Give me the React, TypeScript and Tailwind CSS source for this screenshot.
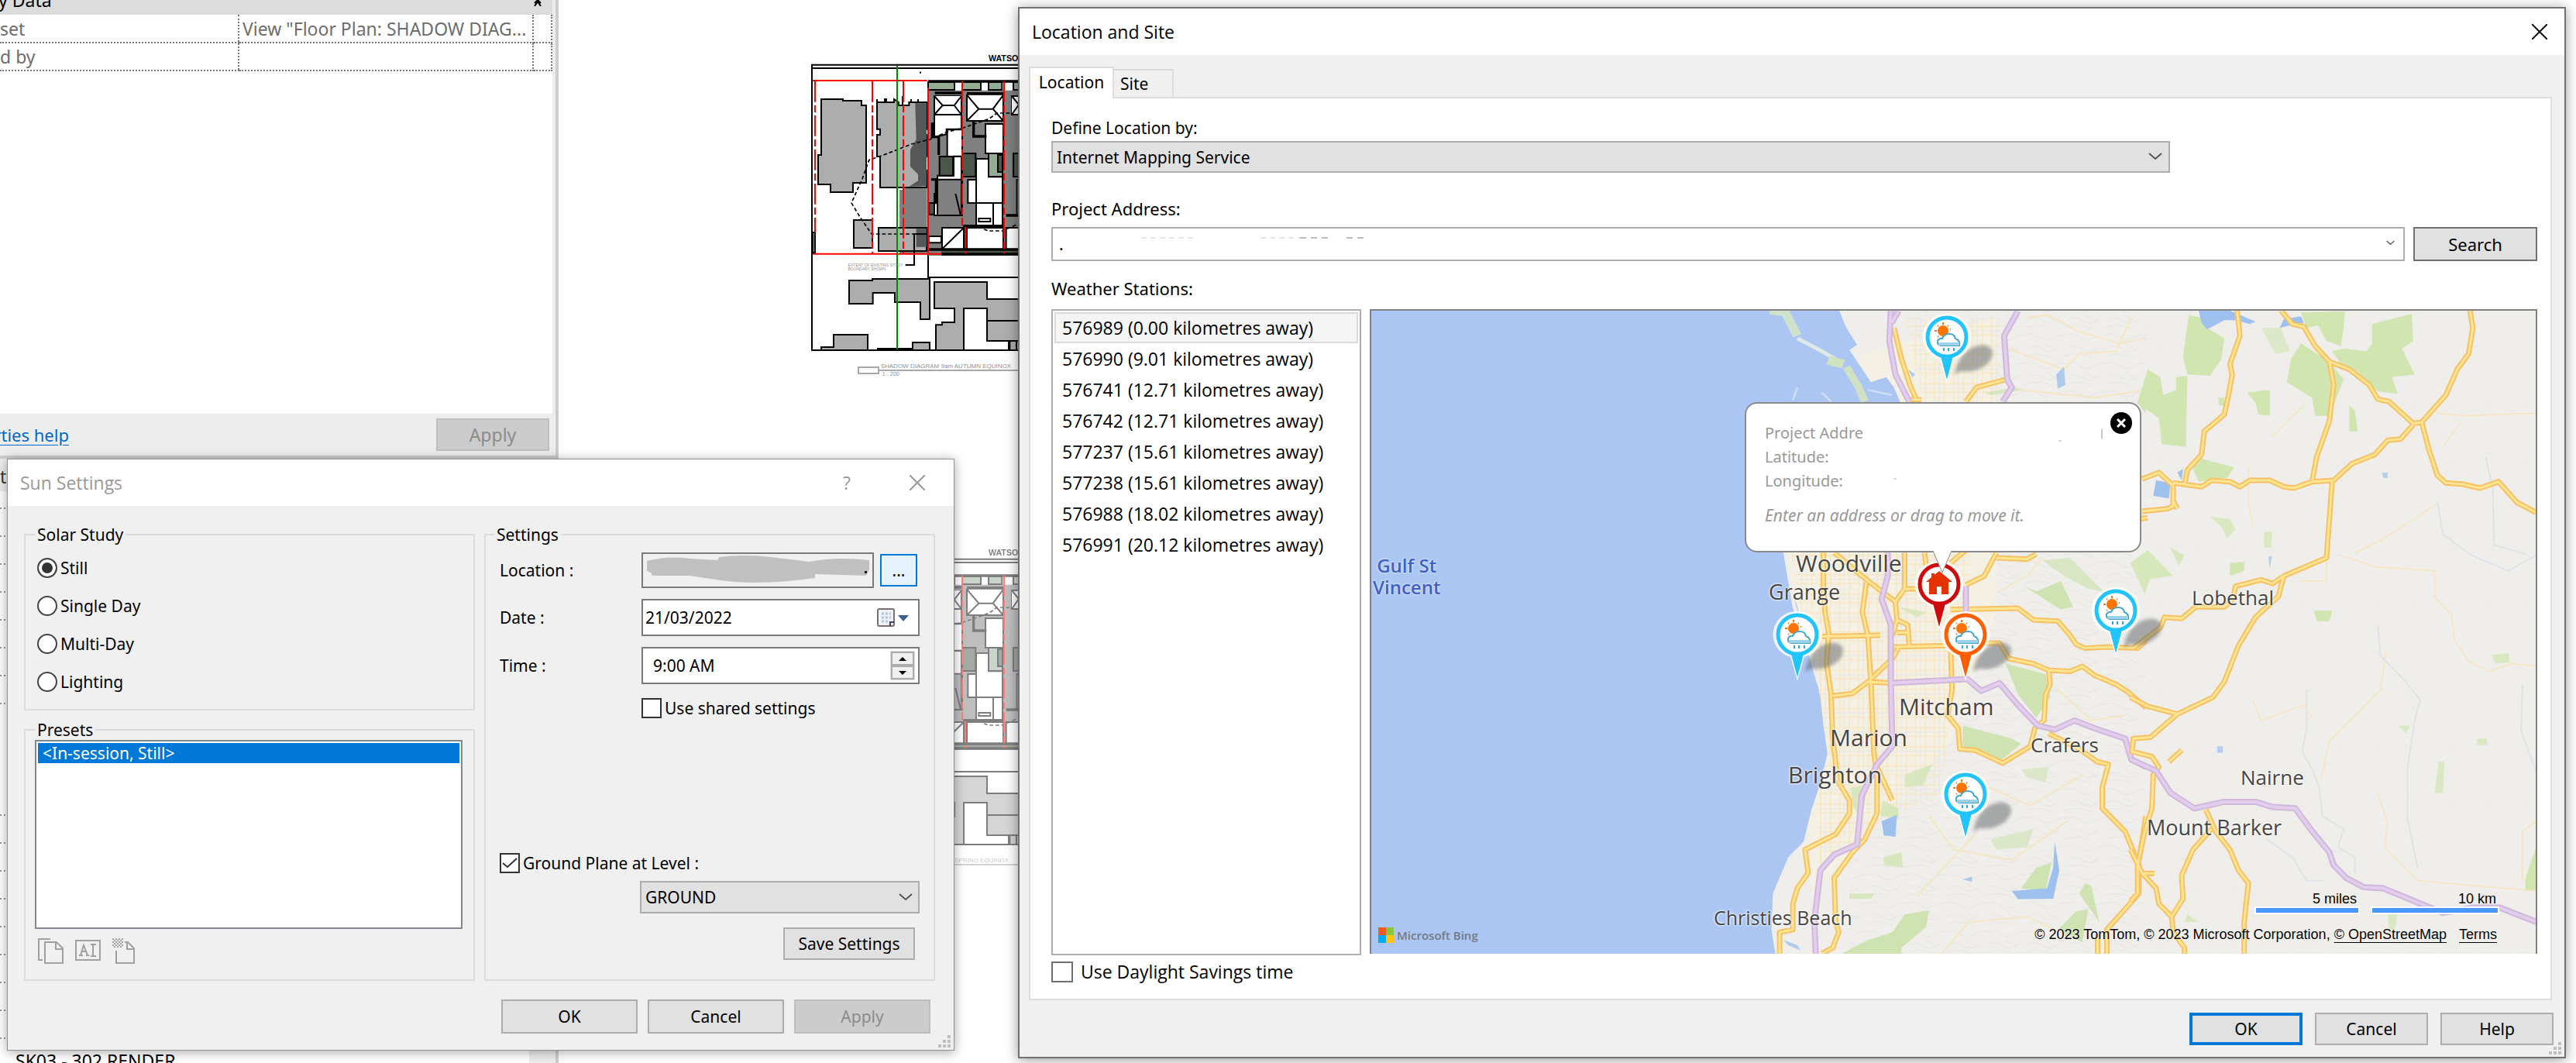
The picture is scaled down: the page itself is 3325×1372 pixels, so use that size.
import React from "react";

interface StationProps {
  id: string;
  distance: string;
}

const stations: StationProps[] = [
  { id: "576989", distance: "0.00" },
  { id: "576990", distance: "9.01" },
  { id: "576741", distance: "12.71" },
  { id: "576742", distance: "12.71" },
  { id: "577237", distance: "15.61" },
  { id: "577238", distance: "15.61" },
  { id: "576988", distance: "18.02" },
  { id: "576991", distance: "20.12" },
];

const studies = ["Still", "Single Day", "Multi-Day", "Lighting"];

const places = [
  { name: "Woodville", className: "left-[548px] top-[306px] text-[30px]" },
  { name: "Grange", className: "left-[513px] top-[343px] text-[27px]" },
  { name: "Mitcham", className: "left-[681px] top-[491px] text-[30px]" },
  { name: "Marion", className: "left-[592px] top-[531px] text-[30px]" },
  { name: "Brighton", className: "left-[538px] top-[579px] text-[30px]" },
  { name: "Crafers", className: "left-[851px] top-[540px] text-[26px]" },
  { name: "Lobethal", className: "left-[1059px] top-[350px] text-[26px]" },
  { name: "Nairne", className: "left-[1122px] top-[582px] text-[26px]" },
  { name: "Mount Barker", className: "left-[1001px] top-[647px] text-[27px]" },
  { name: "Christies Beach", className: "left-[442px] top-[763px] text-[25px]" },
];

// road centre lines, west half of the map
const westRoads = [
  "M515 970V1100L520 1200L532 1280L525 1400L540 1520L545 1690L552 1750L560 1850L600 1930V1980L555 2060L455 2120L465 2210L430 2270L415 2330V2430L372 2440V2523",
  "M655 1085L642 1200L660 1290L670 1470L680 1750L690 1830V1980L650 2080L610 2130L550 2230L555 2400L565 2440L545 2500L510 2523",
  "M550 970L640 1060L705 1120L750 1160L755 1230L790 1250L795 1330",
  "M780 970V1110L750 1160M780 1110H830M755 1230L740 1290M755 1280H790",
  "M510 1295L700 1290M740 1335L920 1330",
  "M545 1525L610 1515L660 1470L730 1475M665 1465L740 1380L760 1340",
  "M845 970L850 1020M980 960L930 1010",
  "M1080 970L1040 1060L980 1095M1080 990L1180 995L1210 975",
  "M930 1190L1150 1185L1200 1230L1280 1235L1320 1290L1340 1325L1370 1340L1440 1335L1540 1340L1568 1310",
  "M1040 1320H1090L1120 1380L1200 1400L1250 1425L1320 1430L1360 1410L1400 1445L1470 1480L1510 1510L1568 1570",
  "M1250 1425L1255 1480L1240 1520L1235 1620L1205 1650L1190 1720L1100 1785L1010 1735L960 1730L955 1650L920 1600L935 1500L930 1340",
  "M1250 1670L1350 1730L1410 1780L1445 1790L1425 1880V1960L1500 2050L1545 2180V2290L1440 2430V2523",
  "M1410 2450V2523M1568 1990L1545 2160",
  "M745 100L770 220L800 330L820 380M795 378H835",
  "M980 385L1015 330L1110 300",
  "M690 1800L740 1930",
];

const westMotorways = [
  "M735 33L730 150L750 280L795 385M760 33L738 80",
  "M725 970V1060L705 1150L735 1250V1470L740 1720L690 1790L640 1910L625 2100L550 2140L505 2200L485 2400L490 2523",
  "M740 1475L985 1460L1030 1505L1090 1475L1150 1560L1215 1640L1270 1655L1335 1620L1400 1650L1500 1690L1520 1770L1568 1800",
  "M1150 33L1105 130L1115 300L1130 330L1100 385",
  "M980 1100V1200",
];

const eastRoads = [
  "M375 33L385 130L350 240L358 280L345 360L330 435L260 500L250 590L200 650L190 710",
  "M530 33L570 85L610 95L650 170L700 230L770 260L840 320L870 375L910 385L995 470L1025 465L1110 360L1150 260L1190 200L1205 100L1195 33",
  "M700 230L715 320L700 460L655 600L640 690",
  "M995 475L950 530L905 535L860 590L780 625L715 690L640 695L575 720L540 715L490 690H420L385 715L350 695L285 690L250 715L150 700",
  "M40 685L100 660L150 710V790L130 800L40 810M150 770L165 800M30 840L60 835",
  "M1025 465L1050 570L1080 670L1110 700L1170 705L1230 720L1295 695L1360 775L1428 815",
  "M710 690L690 990L540 1060L520 1140L440 1220L380 1330L330 1470L290 1530L165 1595L60 1565L0 1530",
  "M540 1060L500 1090L460 1075L370 1100L360 1150L330 1180H230L180 1225L120 1220L105 1260L10 1340",
  "M165 1595L70 1685L10 1690L5 1740L75 1760L100 1800L80 1830L75 1960L50 2050L25 2180V2290L0 2320",
  "M265 1965L300 2050L350 2120L380 2200L415 2250L400 2400V2523",
  "M285 2040L220 2120L180 2220L185 2310L145 2380L100 2330L90 2270L40 2210L0 2120M40 2212H85",
  "M145 2380L150 2440L190 2500V2523M135 1780L180 1735",
];

const eastMotorways = [
  "M0 1770L90 1815L140 1900L225 1960L330 1935H440L500 1955L580 1960L640 2050L700 2130L715 2180L760 2230L820 2265L890 2270L1000 2320L1100 2365L1200 2345H1300L1428 2400",
];

const Roads = ({ lines, motorway }: { lines: string[]; motorway?: boolean }) => (
  <g fill="none" strokeLinejoin="round">
    <path
      d={lines.join("")}
      stroke={motorway ? "#cfb8dc" : "#f8c063"}
      strokeWidth={motorway ? 8 : 7}
      vectorEffect="non-scaling-stroke"
    />
    <path
      d={lines.join("")}
      stroke={motorway ? "#e2cdec" : "#fde592"}
      strokeWidth={motorway ? 4 : 3}
      vectorEffect="non-scaling-stroke"
    />
  </g>
);

const MapGround = () => (
  <svg
    viewBox="1770 401 1503 830"
    preserveAspectRatio="xMinYMin slice"
    className="block h-full w-full"
    aria-hidden="true"
  >
    <defs>
      <pattern id="streets" width="62" height="74" patternUnits="userSpaceOnUse">
        <path d="M10 0V74M40 0L44 74M0 20H62M0 55L62 52" fill="none" stroke="#f8e4b8" strokeWidth="3" />
        <path d="M25 0V74M0 38H62" fill="none" stroke="#e8e6e3" strokeWidth="3" />
      </pattern>
      <pattern id="relief" width="130" height="110" patternUnits="userSpaceOnUse">
        <path
          d="M0 20Q30 5 50 25T95 30T130 15M10 70Q35 50 60 72T115 62M0 100Q50 80 90 104M70 50L110 80"
          fill="none"
          stroke="#e6e5e3"
          strokeWidth="3"
        />
      </pattern>
    </defs>
    <rect x="1770" y="401" width="1503" height="830" fill="#efeeea" />
    <g transform="translate(2150 390) scale(.3954 .3333)">
      <path d="M750 33H1568V2523H600V1900L900 1500L1000 1200V500Z" fill="url(#relief)" />
      <path d="M640 200L1080 60V1200L930 1700L700 2000L480 2300L400 970Z" fill="#f4f0e3" />
      <path d="M410 970H1000L930 1560L900 1900L700 2010L500 2200L480 1500Z" fill="url(#streets)" />
      <path d="M780 60H1090V385H840Z" fill="url(#streets)" />
      <g fill="#cfe3b2">
        <path d="M1110 1400L1240 1440L1255 1530L1210 1610L1150 1520Z" />
        <path d="M970 1640L1130 1690L1160 1710L1090 1780L970 1720Z" />
        <path d="M1170 1100L1210 1120L1290 1080L1330 1180L1290 1190Z" />
        <path d="M780 2370L860 2355L850 2420L770 2500V2523H575L660 2470L740 2440Z" />
        <path d="M1370 2250L1390 2260L1415 2400L1350 2290Z" />
        <path d="M1210 2190L1260 2170L1240 2280L1160 2270Z" />
        <path d="M1340 2360L1380 2350L1360 2480L1280 2430Z" />
        <path d="M1230 1000L1320 990L1430 1120L1380 1110L1300 1060Z" opacity=".7" />
        <path d="M1568 290L1540 390L1568 430Z" />
        <path d="M780 1830L870 1790L840 1870L780 1880Z" opacity=".7" />
        <path d="M605 1880L660 1870L640 2000L610 1950ZM710 1930L760 1960V2000L700 1990Z" opacity=".8" />
        <path d="M1160 1810L1250 1800L1240 1860L1180 1840ZM1060 2080L1200 2040L1180 2110L1080 2120Z" opacity=".6" />
        <path d="M710 2150L770 2130L775 2190L715 2180ZM600 2290L680 2290L670 2310H600Z" opacity=".8" />
        <path d="M1040 350L1140 330L1170 340L1060 360ZM760 1180L850 1200L820 1220Z" opacity=".7" />
      </g>
      <path
        d="M1180 60L1250 50L1340 110L1480 160L1568 140M1120 180L1300 260L1350 200L1470 190L1520 60M1160 340L1400 370L1568 340M1000 1420L1020 1380M1280 1500L1390 1620L1500 1600M1000 1850L1190 1950L1360 1830M860 1990L940 2120L1130 2160L1310 2010M820 2300L900 2200L1010 2060M900 2523L990 2400L1180 2380L1320 2460M1090 1120L1180 1060L1230 990"
        fill="none"
        stroke="#f5e6c4"
        strokeWidth="6"
      />
      <path
        d="M-1000 0H555L590 100L625 165L600 185L625 230L670 310L720 290L745 330L765 385L700 600L385 970L400 1060L430 1180L460 1320L490 1450L505 1530L515 1640L528 1750L500 1880L475 1970L450 2090L400 2150L350 2290L345 2430L358 2523H-1000Z"
        fill="#abc6f2"
      />
      <g fill="none" strokeLinejoin="round">
        <path d="M340 33L390 40L430 130" stroke="#cfe3cc" strokeWidth="30" />
        <path d="M430 140L510 190L560 225" stroke="#dfeae6" strokeWidth="14" />
        <path d="M530 225L580 240" stroke="#cfe3c0" strokeWidth="34" />
        <path d="M590 250L630 330L650 385" stroke="#cfe0c4" strokeWidth="26" />
        <path d="M660 340L740 360M415 380L430 330M510 350L540 385" stroke="#cbdcf3" strokeWidth="8" />
        <path d="M390 970L420 1180L470 1350L500 1480" stroke="#efeeea" strokeWidth="12" />
      </g>
      <g fill="#9dc0ee">
        <path d="M1130 2280L1245 2270L1265 2190L1270 2090L1285 2200L1265 2310L1150 2312Z" />
        <path d="M705 2010L755 1985L750 2070L712 2065Z" />
        <path d="M1275 280L1300 250L1305 320L1280 335ZM790 260L815 280L805 290Z" opacity=".8" />
        <path d="M970 2235L1000 2225V2245ZM385 2470L430 2490L440 2510L400 2490Z" opacity=".8" />
      </g>
      <Roads lines={westRoads} />
      <Roads lines={westMotorways} motorway />
    </g>
    <g transform="translate(2750 390) scale(.3667 .3333)">
      <path d="M48 33H1428V2523H48Z" fill="url(#relief)" opacity=".4" />
      <g fill="#d1e5b0">
        <path d="M205 50L250 60L270 100L330 140L320 220L280 285L200 280L185 210Z" />
        <path d="M60 260L105 290L115 360L160 340L160 290L200 285L195 560L110 550L100 450L25 390Z" />
        <path d="M600 160L700 230L750 300L700 440L650 440L640 370L550 310L565 220Z" />
        <path d="M850 85L990 45L995 150L955 180L1000 280L920 290L940 355L870 345L800 270L740 240L710 190L750 180L830 190L850 160Z" />
        <path d="M600 40L755 35L750 100L740 170L690 150L660 90L620 100Z" />
        <path d="M410 350L490 340L490 440L450 435L440 390Z" />
        <path d="M210 620L250 605L365 640L340 680L240 695Z" />
        <path d="M770 400L790 420L800 500L770 500ZM310 370L330 370V400H310Z" />
        <path d="M280 830L350 840L370 880L340 915L320 870ZM470 890H500L495 950H470Z" opacity=".7" />
        <path d="M0 1010L60 960L150 1060L70 1070L50 1130ZM140 950L190 980L170 1020Z" opacity=".8" />
        <path d="M350 1010L400 1005L400 1040L350 1060ZM645 1195H710L700 1235H655Z" />
        <path d="M1270 1365L1330 1360L1335 1395L1285 1400ZM940 1640H985L970 1670ZM1220 1690H1255V1715H1220ZM1085 1780H1105L1100 1900H1070Z" opacity=".7" />
        <path d="M1428 2110L1390 2230V2280H1428Z" />
        <path d="M460 100H530L560 190L510 200Z" opacity=".6" />
        <path d="M200 2370L240 2400L190 2400ZM905 2370H940L930 2430H910Z" opacity=".7" />
      </g>
      <g fill="#9dc0ee">
        <path d="M240 33H350L440 75L420 85L370 70L330 70L270 105L250 80Z" />
        <path d="M525 100L540 65L600 55L610 80L560 90Z" />
        <path d="M90 690L140 700L135 760L80 750Z" />
        <path d="M165 660L185 645L180 690Z" />
        <path d="M885 660L905 660V680H890ZM305 1720H325V1745H305ZM485 985H498L490 1030Z" opacity=".7" />
      </g>
      <g fill="none" strokeWidth="5">
        <path
          d="M415 640V780L430 860M690 990V1080H590M740 980L860 1025L1070 1040V1140L1130 1210L1140 1310L1190 1390L1260 1430L1340 1400L1428 1410M790 970L900 910L1080 780M1080 430L1180 440L1428 430M1100 560L1160 470M900 1350L880 1500L700 1700L670 1850M430 1540L460 1620L610 1560L640 1610M870 1900L905 2020L895 2110L1010 2240L1428 2280M1380 2240V2050L1428 2010M500 520L610 400"
          stroke="#f6e5c2"
        />
        <path
          d="M1080 770L1100 900L1200 980L1330 1040L1428 980M1250 600L1275 720L1280 940L1390 975M870 1250L880 1370L960 1460L1020 1540L1000 1620L975 1800V2000L1010 2190M620 1500V1650L605 1740L640 1810L665 1880L675 1990L750 2040L730 2110L790 2150V2210M480 2080L570 2150L620 2240L680 2240M1380 1480L1375 1660L1428 1820"
          stroke="#dde1e8"
        />
      </g>
      <Roads lines={eastRoads} />
      <Roads lines={eastMotorways} motorway />
    </g>
  </svg>
);

interface PinProps {
  color: string;
  className: string;
  home?: boolean;
}

const Pin = ({ color, className, home }: PinProps) => (
  <svg viewBox="0 0 100 92" className={`absolute h-[92px] w-[100px] ${className}`} aria-hidden="true">
    {!home && (
      <path
        d="M42 80Q46 56 64 46Q82 38 90 48Q94 62 76 72Q64 78 50 76Z"
        fill="#5f6368"
        className="opacity-50 blur-[2px]"
      />
    )}
    <path
      d="M32 2A30 30 0 0 1 41 61L32 92L23 61A30 30 0 0 1 32 2Z"
      fill="#fff"
      opacity=".8"
    />
    <path d="M24 57H40L32 87Z" fill={color} />
    <circle cx="32" cy="32" r="25" fill="#fff" stroke={color} strokeWidth="5" />
    {home ? (
      <path d="M32 15L49 29H44V45H35V35H29V45H19V29H15L22 23V18H26V20Z" fill="#e63200" />
    ) : (
      <g>
        <circle cx="27" cy="24" r="7" fill="#ff7300" />
        <path
          d="M27 13V16M16 24H19M20 17L21 18M34 17L33 18M36 22H37M20 32L21 31"
          stroke="#ff7300"
          strokeWidth="2"
        />
        <path
          d="M24 43Q19 42 20 37Q22 33 26 34Q28 28 35 28Q42 28 43 34Q49 36 48 43Z"
          fill="#fff"
          stroke="#47a5c9"
          strokeWidth="2"
        />
        <path d="M21 41H48" stroke="#9bd2ea" strokeWidth="4" />
        <path d="M28 46V50M34 46V50M41 46V50" stroke="#2aa5dc" strokeWidth="2" />
      </g>
    )}
  </svg>
);

const StationMap = () => (
  <div className="relative h-[832px] min-w-0 flex-1 border-2 border-b-0 border-[#808080]">
    <div className="h-[830px] overflow-hidden">
      <MapGround />
    </div>
    {places.map((place) => (
      <span
        key={place.name}
        className={`absolute whitespace-nowrap font-['Open_Sans',sans-serif] leading-[40px] text-[#454545] [text-shadow:0_0_3px_#fff,0_0_3px_#fff] ${place.className}`}
      >
        {place.name}
      </span>
    ))}
    <p className="absolute left-[2px] top-[315px] text-center font-['Open_Sans',sans-serif] text-[24px] font-semibold leading-[28px] text-[#3d61c4] [text-shadow:0_0_3px_#dce8fb,0_0_3px_#dce8fb]">
      Gulf St
      <br />
      Vincent
    </p>
    <Pin color="#21c4fd" className="left-[711px] top-[2px]" />
    <Pin color="#cf0a0a" className="left-[701px] top-[321px]" home />
    <Pin color="#21c4fd" className="left-[518px] top-[386px]" />
    <Pin color="#ff5f00" className="left-[735px] top-[386px]" />
    <Pin color="#21c4fd" className="left-[929px] top-[355px]" />
    <Pin color="#21c4fd" className="left-[735px] top-[592px]" />

    <div className="absolute left-[482px] top-[118px] w-[512px] rounded-2xl border-2 border-[#8a8a8a] bg-white px-6 pb-[30px] pt-[22px] text-[20px] leading-[31px] text-[#999]">
      <p>Project Addre</p>
      <p>Latitude:</p>
      <p>Longitude:</p>
      <p className="mt-[14px] text-[21px] italic">Enter an address or drag to move it.</p>
      <button
        type="button"
        aria-label="Close"
        className="absolute right-[10px] top-[11px] flex h-[28px] w-[28px] items-center justify-center rounded-full bg-black"
      >
        <svg viewBox="0 0 12 12" className="h-3 w-3">
          <path d="M1 1L11 11M11 1L1 11" stroke="#fff" strokeWidth="3" />
        </svg>
      </button>
      <svg viewBox="0 0 26 32" className="absolute left-[240px] top-full h-8 w-[26px]" aria-hidden="true">
        <path d="M1 0L13 28L25 0" fill="#fff" stroke="#8a8a8a" strokeWidth="1" />
      </svg>
      <svg viewBox="0 0 300 90" className="absolute left-[170px] top-[30px] h-[90px] w-[300px]" aria-hidden="true">
        <path d="M289 3V15" stroke="#8a8aa0" />
        <path d="M233 18H237M20 67H24" stroke="#b5b5b5" />
      </svg>
    </div>

    <div className="absolute bottom-[14px] left-[9px] flex items-center gap-1 font-['Open_Sans',sans-serif] text-[15px] font-semibold leading-[20px] text-[#737a86]">
      <span className="grid h-5 w-5 grid-cols-2" aria-hidden="true">
        <span className="bg-[#f65a22]" />
        <span className="bg-[#8bc53f]" />
        <span className="bg-[#00aeef]" />
        <span className="bg-[#ffc20e]" />
      </span>
      Microsoft Bing
    </div>

    <div className="absolute bottom-[15px] right-[47px] flex flex-col items-end font-['Liberation_Sans',Arial,sans-serif] text-[18px] leading-[20px] text-black">
      <div className="mb-[16px] flex gap-[14px] text-right">
        <div className="w-[136px]">
          <p className="pr-1">5 miles</p>
          <div className="h-[10px] border-2 border-white bg-[#4797ff]" />
        </div>
        <div className="w-[166px]">
          <p className="pr-1">10 km</p>
          <div className="h-[10px] border-2 border-white bg-[#4797ff]" />
        </div>
      </div>
      <p className="pr-[3px] [text-shadow:0_0_2px_#fff]">
        © 2023 TomTom, © 2023 Microsoft Corporation,{" "}
        <a href="#osm" className="underline underline-offset-4">
          © OpenStreetMap
        </a>
        <a href="#terms" className="ml-4 underline underline-offset-4">
          Terms
        </a>
      </p>
    </div>
  </div>
);

interface PushButtonProps {
  children: React.ReactNode;
  className: string;
  disabled?: boolean;
}

const PushButton = ({ children, className, disabled }: PushButtonProps) => (
  <button
    type="button"
    disabled={disabled}
    className={`flex items-center justify-center border-2 ${
      disabled ? "border-[#bfbfbf] bg-[#ccc] text-[#8b8b8b]" : "bg-[#e1e1e1] text-black"
    } ${className}`}
  >
    {children}
  </button>
);

const Chevron = ({ className }: { className: string }) => (
  <svg viewBox="0 0 18 10" className={`pointer-events-none absolute ${className}`} aria-hidden="true">
    <path d="M1 1L9 8L17 1" fill="none" stroke="#555" strokeWidth="2" />
  </svg>
);

const Cross = ({ color }: { color: string }) => (
  <svg viewBox="0 0 20 20" className="h-5 w-5" aria-hidden="true">
    <path d="M0 0L20 20M20 0L0 20" stroke={color} strokeWidth="2" />
  </svg>
);

const Grip = () => (
  <svg viewBox="0 0 17 17" className="absolute bottom-[2px] right-[3px] h-[17px] w-[17px]" aria-hidden="true">
    <path
      d="M12 0H16V4H12ZM6 6H10V10H6ZM12 6H16V10H12ZM0 12H4V16H0ZM6 12H10V16H6ZM12 12H16V16H12Z"
      fill="#bfbfbf"
    />
  </svg>
);

const LocationDialog = () => (
  <section
    aria-labelledby="location-title"
    className="absolute left-[1314px] right-[13px] top-[9px] border-2 border-[#6f7370] bg-[#f0f0f0] shadow-[0_2px_16px_rgba(0,0,0,0.4)]"
  >
    <header className="flex h-[60px] items-center justify-between bg-white pl-4 pr-[22px]">
      <h1 id="location-title" className="font-['Open_Sans',sans-serif] text-[23px]">
        Location and Site
      </h1>
      <button type="button" aria-label="Close">
        <Cross color="#111" />
      </button>
    </header>

    <div role="tablist" className="flex items-end pl-3 pt-[15px]">
      <button
        type="button"
        role="tab"
        aria-selected="true"
        className="z-10 -mb-[2px] h-[41px] w-[110px] border-2 border-b-0 border-[#dcdcdc] bg-white pb-1"
      >
        Location
      </button>
      <button
        type="button"
        role="tab"
        aria-selected="false"
        className="h-[36px] w-[77px] border-2 border-b-0 border-l-0 border-[#dcdcdc] pl-2 text-left"
      >
        Site
      </button>
    </div>

    <div className="ml-3 mr-4 border-2 border-[#dcdcdc] bg-white pb-[21px] pl-[27px] pr-[17px] pt-[23px]">
      <label htmlFor="define" className="mb-[2px] block leading-[30px]">
        Define Location by:
      </label>
      <div className="relative w-[1444px]">
        <select
          id="define"
          className="h-[41px] w-full appearance-none border-2 border-[#adadad] bg-[#e1e1e1] pl-[5px]"
        >
          <option>Internet Mapping Service</option>
        </select>
        <Chevron className="right-[10px] top-[15px] h-[10px] w-[18px]" />
      </div>

      <label htmlFor="address" className="mb-[9px] mt-[31px] block text-[22px] leading-[30px]">
        Project Address:
      </label>
      <div className="flex gap-[11px]">
        <div className="relative flex-1">
          <input
            id="address"
            defaultValue="."
            className="h-[44px] w-full border-2 border-[#abadb3] bg-white pl-[8px]"
          />
          <svg
            viewBox="0 0 300 4"
            className="pointer-events-none absolute left-[116px] top-[12px] h-1 w-[300px]"
            aria-hidden="true"
          >
            <path
              d="M0 2H68M154 2H205"
              stroke="#ccc"
              strokeWidth="1"
              strokeDasharray="7 5"
            />
            <path d="M205 2H245M265 2H292" stroke="#777" strokeWidth="1" strokeDasharray="8 6" />
          </svg>
          <Chevron className="right-[13px] top-[17px] h-[7px] w-[11px]" />
        </div>
        <PushButton className="h-[44px] w-[160px] border-[#707070] bg-[#ddd]">
          <span className="text-[22px]">Search</span>
        </PushButton>
      </div>

      <h2 id="stations" className="mb-3 mt-5 text-[22px] leading-[30px]">
        Weather Stations:
      </h2>
      <div className="flex gap-[11px]">
        <ul
          role="listbox"
          aria-labelledby="stations"
          className="h-[834px] w-[400px] border-2 border-[#abadb3] p-[2px] font-['Open_Sans',sans-serif] text-[23px]"
        >
          {stations.map((station, index) => (
            <li
              key={station.id}
              role="option"
              aria-selected={index === 0}
              className={`flex h-10 items-center border-2 pl-[8px] ${
                index === 0 ? "border-[#dadada] bg-[#f5f5f5]" : "border-transparent"
              }`}
            >
              {station.id} ({station.distance} kilometres away)
            </li>
          ))}
        </ul>
        <StationMap />
      </div>

      <label className="mt-[7px] flex h-7 items-center gap-[10px] font-['Open_Sans',sans-serif] text-[23px]">
        <input type="checkbox" className="h-[27px] w-[28px] appearance-none border-2 border-[#707070] bg-white" />
        Use Daylight Savings time
      </label>
    </div>

    <footer className="flex justify-end gap-4 pb-[15px] pr-[14px] pt-4">
      <PushButton className="h-[42px] w-[146px] border-4 border-[#0078d7]">OK</PushButton>
      <PushButton className="h-[42px] w-[146px] border-[#adadad]">Cancel</PushButton>
      <PushButton className="h-[42px] w-[146px] border-[#adadad]">Help</PushButton>
    </footer>
    <Grip />
  </section>
);

const CopyIcon = () => (
  <svg viewBox="0 0 34 34" className="h-[34px] w-[34px]" fill="none" stroke="#a0a0a0" strokeWidth="2">
    <path d="M16 1H1V28H6" />
    <path d="M9 5H24L32 13V32H9ZM23 5V14H32" fill="#f0f0f0" />
  </svg>
);

const RenameIcon = () => (
  <svg viewBox="0 0 34 34" className="h-[34px] w-[34px]" fill="none" stroke="#a0a0a0" strokeWidth="2">
    <rect x="1" y="3" width="31" height="25" />
    <path d="M5 22H10M7 22L11 9L16 22M14 22H18M9 17H14" />
    <path d="M20 8H22L23 9L24 8H27M23 9V22M20 23H22L23 22L24 23H27" />
  </svg>
);

const DeleteIcon = () => (
  <svg viewBox="0 0 34 34" className="h-[34px] w-[34px]" fill="none" stroke="#a0a0a0" strokeWidth="2">
    <path d="M0 1H14M0 5H14M0 9H14" strokeDasharray="2 2" />
    <path d="M2 3H14M2 7H14M2 11H14" strokeDasharray="2 2" />
    <path d="M5 16V32H28V13L20 5H16M19 5V14H28" />
  </svg>
);

const SunDialog = () => (
  <section
    aria-labelledby="sun-title"
    className="absolute left-[9px] top-[592px] w-[1223px] border border-[#8f8f8f] bg-[#f0f0f0] shadow-[0_2px_14px_rgba(0,0,0,0.35)]"
  >
    <header className="flex h-[60px] items-center bg-white pl-4 pr-[37px] font-['Open_Sans',sans-serif] text-[23px] text-[#999]">
      <h1 id="sun-title" className="flex-1">
        Sun Settings
      </h1>
      <button type="button" aria-label="Context help" className="mr-[75px] w-3">
        ?
      </button>
      <button type="button" aria-label="Close">
        <Cross color="#999" />
      </button>
    </header>

    <div className="flex gap-3 pl-[21px] pr-6 pt-[20px]">
      <div className="flex w-[582px] flex-col gap-[10px]">
        <fieldset className="h-[244px] border-2 border-[#dcdcdc] px-[15px]">
          <legend className="-ml-[3px] px-[3px] leading-[34px]">Solar Study</legend>
          <div className="mt-[12px] flex flex-col gap-[22px]">
            {studies.map((study) => (
              <label key={study} className="flex h-[27px] items-center gap-[4px]">
                <input
                  type="radio"
                  name="study"
                  defaultChecked={study === "Still"}
                  className="h-[26px] w-[26px] appearance-none rounded-full border-2 border-[#444] bg-white checked:bg-[#333] checked:shadow-[inset_0_0_0_4px_#fff]"
                />
                {study}
              </label>
            ))}
          </div>
        </fieldset>
        <fieldset className="h-[339px] border-2 border-[#dcdcdc] px-3">
          <legend className="px-[3px] leading-[30px]">Presets</legend>
          <ul
            role="listbox"
            aria-label="Presets"
            className="-mt-[2px] h-[244px] w-[552px] border-2 border-[#828790] bg-white p-[2px]"
          >
            <li role="option" aria-selected="true" className="bg-[#0078d7] pl-[6px] leading-[26px] text-white">
              &lt;In-session, Still&gt;
            </li>
          </ul>
          <div className="mt-[12px] flex gap-[14px] pl-1">
            <button type="button" aria-label="Duplicate" disabled>
              <CopyIcon />
            </button>
            <button type="button" aria-label="Rename" disabled>
              <RenameIcon />
            </button>
            <button type="button" aria-label="Delete" disabled>
              <DeleteIcon />
            </button>
          </div>
        </fieldset>
      </div>

      <fieldset className="flex-1 border-2 border-[#dcdcdc] pl-[18px] pr-[18px]">
        <legend className="-ml-[7px] px-[3px] leading-[34px]">Settings</legend>
        <div className="grid grid-cols-[183px_1fr] items-center gap-y-[14px] pt-[6px]">
          <label htmlFor="location">Location :</label>
          <div className="flex items-center gap-2">
            <div className="relative w-[300px]">
              <input id="location" readOnly className="block h-[46px] w-full border-2 border-[#7a7a7a]" />
              <svg
                viewBox="0 0 296 42"
                className="pointer-events-none absolute left-[2px] top-[2px] h-[42px] w-[296px]"
                aria-hidden="true"
              >
                <path
                  d="M5 9Q35 2 60 6L96 8L98 4Q130 0 165 4L215 10Q250 3 292 8V20L288 28L222 26V31Q150 41 100 34L60 28H12L10 24L5 22Z"
                  fill="#c0c0c0"
                />
                <path d="M286 22H289V25H286Z" fill="#112" />
              </svg>
            </div>
            <button
              type="button"
              aria-label="Browse location"
              className="h-[42px] w-[48px] border-2 border-[#0078d7] bg-[#e5f1fb]"
            >
              ...
            </button>
          </div>

          <label htmlFor="date">Date :</label>
          <div className="relative">
            <input
              id="date"
              defaultValue="21/03/2022"
              className="block h-[48px] w-full border-2 border-[#7a7a7a] bg-white pl-[3px]"
            />
            <svg viewBox="0 0 42 28" className="absolute right-[13px] top-[12px] h-7 w-[42px]" aria-hidden="true">
              <rect x="1" y="1" width="21" height="22" rx="2" fill="#eef2f8" stroke="#7d6f6f" strokeWidth="2" />
              <path d="M6 7H18M6 12H18M6 17H15" stroke="#b9c5d6" strokeWidth="3" strokeDasharray="3 2" />
              <path d="M17 23V18H22" fill="#fff" stroke="#3c4460" strokeWidth="2" />
              <path d="M27 9H41L34 17Z" fill="#3f5f92" />
            </svg>
          </div>

          <label htmlFor="time">Time :</label>
          <div className="flex h-[48px] items-center border-2 border-[#7a7a7a] bg-white pr-1">
            <input id="time" defaultValue="9:00 AM" className="min-w-0 flex-1 pl-[13px]" />
            <div className="flex flex-col border border-[#ddd]">
              <button
                type="button"
                aria-label="Later"
                className="flex h-[18px] w-[30px] items-center justify-center border-2 border-[#acacac] bg-[#f0f0f0]"
              >
                <svg viewBox="0 0 10 5" className="h-[5px] w-[10px]">
                  <path d="M5 0L10 5H0Z" />
                </svg>
              </button>
              <button
                type="button"
                aria-label="Earlier"
                className="flex h-[18px] w-[30px] items-center justify-center border-2 border-[#acacac] bg-[#f0f0f0]"
              >
                <svg viewBox="0 0 10 5" className="h-[5px] w-[10px]">
                  <path d="M5 5L10 0H0Z" />
                </svg>
              </button>
            </div>
          </div>
        </div>

        <label className="ml-[183px] mt-[18px] flex h-[26px] items-center gap-[4px]">
          <input type="checkbox" className="h-[26px] w-[26px] appearance-none border-2 border-[#333] bg-white" />
          Use shared settings
        </label>

        <label className="relative mt-[174px] flex h-[26px] items-center gap-[4px]">
          <input
            type="checkbox"
            defaultChecked
            className="h-[26px] w-[26px] appearance-none border-2 border-[#333] bg-white"
          />
          <svg
            viewBox="0 0 20 14"
            className="pointer-events-none absolute left-[3px] top-[6px] h-[14px] w-5"
            aria-hidden="true"
          >
            <path d="M1 7L7 12L19 1" fill="none" stroke="#333" strokeWidth="2" />
          </svg>
          Ground Plane at Level :
        </label>

        <div className="relative ml-[181px] mt-[10px]">
          <select
            aria-label="Ground plane level"
            className="h-[42px] w-full appearance-none border-2 border-[#adadad] bg-[#e1e1e1] pl-[5px]"
          >
            <option>GROUND</option>
          </select>
          <Chevron className="right-[9px] top-[16px] h-[10px] w-[18px]" />
        </div>
        <div className="mr-[6px] mt-[18px] flex justify-end">
          <PushButton className="h-[42px] w-[170px] border-[#adadad]">Save Settings</PushButton>
        </div>
      </fieldset>
    </div>

    <footer className="flex justify-end gap-[13px] pb-[21px] pr-[30px] pt-6">
      <PushButton className="h-[44px] w-[176px] border-[#adadad]">OK</PushButton>
      <PushButton className="h-[44px] w-[176px] border-[#adadad]">Cancel</PushButton>
      <PushButton className="h-[44px] w-[176px]" disabled>
        Apply
      </PushButton>
    </footer>
    <Grip />
  </section>
);

interface FloorPlanProps {
  caption: string;
  className: string;
  axis?: boolean;
}

const FloorPlan = ({ caption, className, axis }: FloorPlanProps) => (
  <svg viewBox="0 0 855 1350" className={`absolute left-[1030px] h-[450px] w-[285px] ${className}`} role="img" aria-label={caption}>
    <g fill="none" stroke="#000" strokeWidth="6">
      <path d="M900 101H54V1206H900M54 114H900M504 835V924H900" />
      {/* shadows */}
      <g stroke="none">
        <path d="M393 585H408V577H500V835H393V760L408 730H393Z" fill="#808080" />
        <path d="M504 200H855V840H504Z" fill="#808080" />
        <path d="M555 815H855V837H555Z" fill="#4c574b" />
      </g>
      {/* neighbouring buildings */}
      <g fill="#adadad">
        <path d="M90 234H174V240H246V258H264V558H213V594H126V564H78V450H90Z" />
        <path d="M306 234V246H336V234H342V246H372V234L390 246V258H405V222V258H430V246H438V234V246H465V234V246H500V350H492V372H498V456H492V510H498V576H318V456H306V372H318V350H306Z" />
        <path d="M216 702H288V810H216ZM312 732H498V822H312ZM57 750H66V828H57Z" />
        <path d="M198 936H288V930H510V1086H474V1020H375V984H290V1026H198Z" />
        <path d="M528 942H732V1008H870V1206H820V1170H732V1044H642V1206H534V1108H558V1098H606V1044H528Z" />
        <path d="M90 1206V1194H138V1146H270V1206ZM444 1206V1176H510V1206Z" />
        <path d="M732 1092H870M732 1170H870M816 1170V1206M846 1170V1206M306 1200H444" />
      </g>
      <path d="M454 250H498V570L430 572L465 550V525L435 495V430L458 390ZM458 736H498V806H458Z" fill="#575757" stroke="none" />
      {/* roofs and courts */}
      <g fill="#fff">
        <path d="M528 222H633V294H528ZM654 218H795V318H654ZM828 222H870V294H828Z" />
        <path d="M528 294H633V350H575V370L528 380ZM578 352H636V455H603V530H540V600H528V684H633V456H578ZM540 545H636V684H540Z" />
        <path d="M726 330H795V444H726ZM690 465H738V535H792V636H690ZM690 636H792V724H690ZM848 546H870V684H848Z" />
        <path d="M558 732H642V816H558ZM654 732H795V816H654ZM806 732H870V816H806ZM506 765H555V790H506Z" />
        <path d="M528 222L560 258H605L633 222M528 294L560 258M605 258L633 294M654 218L700 272H755L795 218M654 318L700 272M755 272L795 318M828 222L855 255L828 294M560 812L642 732M610 600L630 684M756 636V724" />
        <path d="M700 696H745V708H700ZM658 546H690V636H658Z" />
      </g>
      <g fill="#95ac94">
        <path d="M504 168H606V198H504ZM636 168H708V198H636ZM738 168H790V198H738ZM834 168H870V198H834ZM738 444H792V534H738Z" />
        <path d="M548 456H600V530H548ZM636 444H688V534H636ZM774 450H792V516H774ZM834 444H870V534H834ZM506 636H528V680H506Z" fill="#4c574b" />
      </g>
      <path d="M504 165H855M530 210H636M654 212H800M520 325V380H545V450M680 320V378H730M516 545H535V640M806 684H855M640 725H800M504 816H855M555 834H855" strokeWidth="10" />
      <path d="M416 876H450V756H498" />
      <path d="M820 288H770L740 310L640 345L575 362L510 390L440 408L345 445L275 470L250 540L207 636L240 690L285 756H504M720 738L740 744H790L846 720" strokeDasharray="14 9" strokeWidth="5" />
      {/* lot boundaries */}
      <g stroke="#f00">
        <path d="M66 165V750M288 165V832M408 165V832M636 165V724M798 165V832M648 730V832" strokeDasharray="80 12 28 12" />
        <path d="M57 162H500M57 833H555M504 190V832" />
      </g>
      {axis && <path d="M384 105V1203" stroke="#008a00" />}
      <path d="M234 1272H312V1296H234ZM312 1284H870" stroke="#a9a9a9" />
    </g>
    <rect x="471" y="128" width="6" height="6" />
    <g className="font-['Liberation_Sans',Arial,sans-serif]">
      <text x="738" y="87" fontSize="32" fontWeight="bold">
        WATSON
      </text>
      <g fill="#8f8f8f">
        <text x="194" y="882" fontSize="15">
          EXTENT OF EXISTING STUDY
        </text>
        <text x="194" y="897" fontSize="15">
          BOUNDARY SHOWN
        </text>
        <text x="320" y="1274" fontSize="24">
          {caption}
        </text>
        <text x="326" y="1304" fontSize="22">
          1 : 200
        </text>
      </g>
    </g>
  </svg>
);

const browserRows = [
  true, true, true, true, true, true, true, true, false, false, false, true, true, true, true, true, true, true, true,
  true,
];

const PropertiesPalette = () => (
  <aside className="flex h-full w-[721px] flex-col border-r-4 border-[#cdcdcd] bg-[#ededed] text-[23px] text-[#6d6d6d]">
    <div className="mr-1 flex-none bg-white">
      <div className="flex h-[19px] items-end justify-between overflow-hidden bg-[#dcdcdc] pr-[14px] text-black">
        <span className="-ml-[2px] leading-[38px]">y Data</span>
        <svg viewBox="0 0 10 8" className="mb-[11px] h-2 w-[10px]" aria-hidden="true">
          <path d="M1 8L5 2L9 8M1 4L5 0L9 4" fill="none" stroke="#000" strokeWidth="2" />
        </svg>
      </div>
      <table className="h-[72px] w-full table-fixed border-collapse">
        <tbody>
          <tr>
            <td className="h-[36px] w-[308px] border-b-2 border-dotted border-[#777]">set</td>
            <td className="w-[380px] whitespace-nowrap border-2 border-t-0 border-dotted border-[#777] pl-1">
              View "Floor Plan: SHADOW DIAG...
            </td>
            <td className="border-2 border-t-0 border-dotted border-[#777]" />
          </tr>
          <tr>
            <td className="h-[36px] border-b-2 border-dotted border-[#777]">d by</td>
            <td className="border-2 border-dotted border-[#777]" />
            <td className="border-2 border-dotted border-[#777]" />
          </tr>
        </tbody>
      </table>
      <div className="h-[442px]" />
    </div>
    <div className="flex h-[58px] flex-none items-center justify-between border-b-4 border-[#cdcdcd] pr-[8px]">
      <span className="flex w-[89px] justify-end overflow-hidden">
        <a href="#help" className="whitespace-nowrap text-[22px] text-[#0066cc] underline underline-offset-4">
          rties help
        </a>
      </span>
      <PushButton className="h-[42px] w-[146px]" disabled>
        Apply
      </PushButton>
    </div>
    <p className="h-[42px] flex-none pt-[10px] leading-[26px] text-[#333]">t</p>
    <div className="mr-[34px] flex-1 bg-white">
      {browserRows.map((ruled, index) => (
        <div
          key={index}
          className={`h-9 border-t-2 border-dotted ${index === 0 ? "mt-[21px]" : ""} ${
            ruled ? "border-[#999]" : "border-transparent"
          }`}
        />
      ))}
      <p className="-mt-[21px] pl-5 leading-[30px] text-black">SK03 - 302 RENDER</p>
    </div>
  </aside>
);

export default function App(): JSX.Element {
  return (
    <main className="relative h-screen overflow-hidden bg-white font-['Noto_Sans',sans-serif] text-[21px] leading-[28px] text-black">
      <PropertiesPalette />
      <FloorPlan caption="SHADOW DIAGRAM 9am AUTUMN EQUINOX" className="top-[50px]" axis />
      <FloorPlan caption="SHADOW DIAGRAM 9am SPRING EQUINOX" className="top-[688px] opacity-50" />
      <SunDialog />
      <LocationDialog />
    </main>
  );
}
